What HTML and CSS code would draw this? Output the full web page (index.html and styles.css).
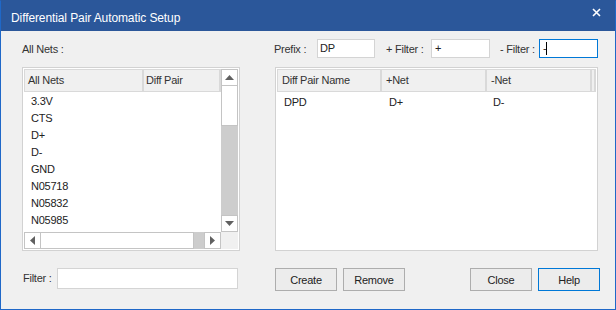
FILE: index.html
```html
<!DOCTYPE html>
<html>
<head>
<meta charset="utf-8">
<link rel="stylesheet" href="styles.css">
</head>
<body>
<div class="window">
  <div class="titlebar">
    <span class="title">Differential Pair Automatic Setup</span>
    <svg class="close" width="9" height="9" viewBox="0 0 9 9"><path d="M1 1 L8 8 M8 1 L1 8" stroke="#fff" stroke-width="1.6" fill="none"/></svg>
  </div>
  <div class="content">
    <div class="row toprow">
      <div class="col-left"><span class="label">All Nets :</span></div>
      <div class="col-right filters">
        <span class="label lbl-prefix">Prefix :</span>
        <div class="input in-prefix">DP</div>
        <span class="label lbl-plus">+ Filter :</span>
        <div class="input in-plus">+</div>
        <span class="label lbl-minus">- Filter :</span>
        <div class="input in-minus focused">-<span class="caret"></span></div>
      </div>
    </div>

    <div class="row listrow">
      <div class="listbox nets">
        <div class="lb-main">
          <div class="lb-table">
            <div class="hdr">
              <div class="hcell c-nets">All Nets</div>
              <div class="hcell c-pair">Diff Pair</div>
            </div>
            <div class="rows">
              <div class="r">3.3V</div>
              <div class="r">CTS</div>
              <div class="r">D+</div>
              <div class="r">D-</div>
              <div class="r">GND</div>
              <div class="r">N05718</div>
              <div class="r">N05832</div>
              <div class="r">N05985</div>
            </div>
          </div>
          <div class="vscroll">
            <div class="sbtn"><svg width="9" height="5" viewBox="0 0 9 5"><path d="M0 5 L4.5 0 L9 5 Z" fill="#606060"/></svg></div>
            <div class="vthumb"></div>
            <div class="vtrack"></div>
            <div class="sbtn"><svg width="9" height="5" viewBox="0 0 9 5"><path d="M0 0 L4.5 5 L9 0 Z" fill="#606060"/></svg></div>
          </div>
        </div>
        <div class="hrow">
          <div class="hscroll">
            <div class="sbtn"><svg width="5" height="9" viewBox="0 0 5 9"><path d="M5 0 L0 4.5 L5 9 Z" fill="#606060"/></svg></div>
            <div class="hthumb"></div>
            <div class="htrack"></div>
            <div class="sbtn"><svg width="5" height="9" viewBox="0 0 5 9"><path d="M0 0 L5 4.5 L0 9 Z" fill="#606060"/></svg></div>
          </div>
          <div class="corner"></div>
        </div>
      </div>

      <div class="listbox pairs">
        <div class="hdr">
          <div class="hcell c-name">Diff Pair Name</div>
          <div class="hcell c-pos">+Net</div>
          <div class="hcell c-neg">-Net</div>
          <div class="hcell c-rest"></div>
        </div>
        <div class="prow">
          <div class="pcell c-name">DPD</div>
          <div class="pcell c-pos">D+</div>
          <div class="pcell c-neg">D-</div>
        </div>
      </div>
    </div>

    <div class="row bottomrow">
      <div class="col-left filterbox">
        <span class="label lbl-filter">Filter :</span>
        <div class="input in-filter"></div>
      </div>
      <div class="col-right buttons">
        <div class="btn">Create</div>
        <div class="btn">Remove</div>
        <div class="spacer"></div>
        <div class="btn">Close</div>
        <div class="btn default">Help</div>
      </div>
    </div>
  </div>
</div>
</body>
</html>
```
FILE: styles.css
```css
html, body {
  margin: 0;
  padding: 0;
  background: #f0f0f0;
}
.window {
  width: 616px;
  height: 310px;
  box-sizing: border-box;
  border: 1px solid #1f68c8;
  border-top-color: #2b579a;
  background: #f0f0f0;
  font-family: "Liberation Sans", Arial, sans-serif;
  font-size: 11px;
  letter-spacing: -0.25px;
  color: #222;
}
.titlebar {
  height: 30px;
  background: #2b579a;
  display: flex;
  justify-content: space-between;
  align-items: flex-start;
  padding: 0 14px 0 10px;
}
.title {
  color: #fff;
  font-size: 12px;
  letter-spacing: -0.1px;
  line-height: 15px;
  margin-top: 10px;
}
.close {
  margin-top: 7px;
}
.content {
  padding: 8px 15px 0 21px;
}
.row {
  display: flex;
  gap: 35px;
}
.col-left {
  width: 218px;
  flex: none;
}
.col-right {
  width: 325px;
  flex: none;
}
.label {
  color: #333;
}
.toprow {
  height: 19px;
}
.toprow .col-left {
  display: flex;
  align-items: center;
}
.filters {
  display: flex;
  align-items: center;
}
.lbl-prefix { width: 43px; margin-left: -1px; }
.lbl-plus { width: 45px; margin-left: 11px; }
.lbl-minus { width: 39px; margin-left: 10px; }
.input {
  box-sizing: border-box;
  height: 19px;
  background: #fff;
  border: 1px solid #d4d4d4;
  padding-left: 2px;
  line-height: 17px;
  color: #222;
  display: flex;
  align-items: center;
}
.in-prefix { width: 58px; }
.in-plus { width: 59px; padding-left: 3px; }
.in-minus { width: 59px; padding-left: 3px; }
.input.focused { border-color: #0078d7; }
.caret {
  display: inline-block;
  width: 1px;
  height: 13px;
  background: #000;
  margin-left: 0px;
}

.listrow {
  margin-top: 9px;
  height: 184px;
}
.listbox {
  box-sizing: border-box;
  height: 184px;
  border: 1px solid #d2d2d2;
  padding: 1px;
  background: #fff;
  flex: none;
}
.nets { width: 218px; }
.pairs { width: 323px; }
.lb-main {
  display: flex;
  height: 163px;
}
.lb-table {
  width: 197px;
}
.hdr {
  display: flex;
  height: 23px;
  box-sizing: border-box;
  background: #f0f0f0;
  border-top: 1px solid #d9d9d9;
  border-bottom: 1px solid #d9d9d9;
}
.hcell {
  box-sizing: border-box;
  height: 21px;
  line-height: 21px;
  padding-left: 3px;
  border-right: 2px solid #d9d9d9;
  color: #333;
  white-space: nowrap;
  overflow: hidden;
}
.hcell:first-child { border-left: 1px solid #d9d9d9; }
.c-nets { width: 120px; }
.c-pair { width: 77px; padding-left: 2px; }
.c-name { width: 105px; }
.c-pos { width: 105px; }
.c-neg { width: 105px; }
.c-rest { width: 4px; padding: 0; }
.pairs .hcell { padding-left: 4px; }
.pairs .hcell.c-rest { padding: 0; }
.rows {
  padding-top: 1px;
}
.r {
  height: 17px;
  line-height: 17px;
  padding-left: 7px;
}
.prow {
  display: flex;
  height: 17px;
  line-height: 17px;
  margin-top: 2px;
}
.pcell {
  box-sizing: border-box;
  padding-left: 7px;
}
.pcell.c-neg { padding-left: 6px; }

.vscroll {
  width: 17px;
  display: flex;
  flex-direction: column;
}
.sbtn {
  box-sizing: border-box;
  width: 17px;
  height: 17px;
  border: 1px solid #c4c4c4;
  background: #fff;
  display: flex;
  align-items: center;
  justify-content: center;
  flex: none;
}
.vthumb {
  box-sizing: border-box;
  height: 40px;
  border: 1px solid #c4c4c4;
  border-top: none;
  background: #fff;
}
.vtrack {
  flex: 1;
  background: #cdcdcd;
}
.hrow {
  display: flex;
  height: 17px;
}
.hscroll {
  width: 197px;
  display: flex;
}
.hthumb {
  box-sizing: border-box;
  width: 153px;
  border: 1px solid #c4c4c4;
  border-left: none;
  background: #fff;
}
.htrack {
  flex: 1;
  background: #cdcdcd;
}
.corner {
  width: 17px;
  background: #f0f0f0;
}

.bottomrow {
  margin-top: 17px;
  height: 23px;
}
.filterbox {
  display: flex;
  align-items: flex-start;
}
.lbl-filter {
  width: 34px;
  margin-left: 1px;
  line-height: 19px;
  margin-top: 1px;
}
.in-filter {
  width: 181px;
  height: 21px;
}
.buttons {
  display: flex;
  gap: 6px;
}
.spacer { flex: 1; }
.btn {
  box-sizing: border-box;
  width: 62px;
  height: 23px;
  border: 1px solid #adadad;
  background: #ececec;
  display: flex;
  align-items: center;
  justify-content: center;
  color: #222;
}
.btn.default {
  border-color: #0078d7;
}
```
